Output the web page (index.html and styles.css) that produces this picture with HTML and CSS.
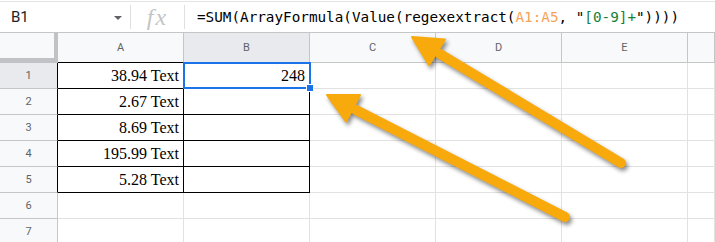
FILE: index.html
```html
<!DOCTYPE html>
<html lang="en">
<head>
    <meta charset="UTF-8">
    <title>Sheet</title>
    <link rel="stylesheet" href="styles.css">
</head>
<body>

    <div class="formula-bar">
        <div class="name-box">
            <span>B1</span>
            <span class="caret"></span>
        </div>
        <div class="divider"></div>
        <div class="fx">fx</div>
        <div class="divider"></div>
        <div class="formula">=SUM(ArrayFormula(Value(regexextract(<span class="ref">A1:A5</span>, "<span class="str">[0-9]+</span>"))))</div>
    </div>

    <div class="sheet">
        <!-- naglowki kolumn -->
        <div class="corner"></div>
        <div class="col-head boxed-top">A</div>
        <div class="col-head boxed-top sel">B</div>
        <div class="col-head">C</div>
        <div class="col-head">D</div>
        <div class="col-head">E</div>
        <div class="col-head"></div>

        <div class="row-head boxed-left sel">1</div>
        <div class="cell boxed">38.94 Text</div>
        <div class="cell boxed current">248<div class="selection"><span class="handle"></span></div></div>
        <div class="cell"></div><div class="cell"></div><div class="cell"></div><div class="cell"></div>

        <div class="row-head boxed-left">2</div>
        <div class="cell boxed">2.67 Text</div>
        <div class="cell boxed"></div>
        <div class="cell"></div><div class="cell"></div><div class="cell"></div><div class="cell"></div>

        <div class="row-head boxed-left">3</div>
        <div class="cell boxed">8.69 Text</div>
        <div class="cell boxed"></div>
        <div class="cell"></div><div class="cell"></div><div class="cell"></div><div class="cell"></div>

        <div class="row-head boxed-left">4</div>
        <div class="cell boxed">195.99 Text</div>
        <div class="cell boxed"></div>
        <div class="cell"></div><div class="cell"></div><div class="cell"></div><div class="cell"></div>

        <div class="row-head boxed-left">5</div>
        <div class="cell boxed">5.28 Text</div>
        <div class="cell boxed"></div>
        <div class="cell"></div><div class="cell"></div><div class="cell"></div><div class="cell"></div>

        <div class="row-head">6</div>
        <div class="cell"></div><div class="cell"></div><div class="cell"></div><div class="cell"></div><div class="cell"></div><div class="cell"></div>

        <div class="row-head">7</div>
        <div class="cell"></div><div class="cell"></div><div class="cell"></div><div class="cell"></div><div class="cell"></div><div class="cell"></div>
    </div>

    <!-- strzalki z adnotacja -->
    <svg class="arrows" width="715" height="242" viewBox="0 0 715 242">
        <g class="arrow">
            <line x1="621" y1="163" x2="440" y2="54" />
            <polygon points="412,37 445,39.5 429,65" />
        </g>
        <g class="arrow">
            <line x1="565" y1="217" x2="356" y2="110" />
            <polygon points="327,95 360,95 346,121.5" />
        </g>
    </svg>

</body>
</html>
```

FILE: styles.css
```css
html, body {
    margin: 0;
    height: 100%;
}

body {
    position: relative;
    width: 715px;
    height: 242px;
    overflow: hidden;
    background: #fff;
    font-family: Roboto, "Liberation Sans", sans-serif;
}

.formula-bar {
    display: flex;
    align-items: center;
    height: 30px;
    margin-top: 1px;
    border-top: 1px solid #e3e3e3;
    border-bottom: 1px solid #c4c7c5;
}

.name-box {
    width: 130px;
    box-sizing: border-box;
    padding: 0 8px 0 11px;
    display: flex;
    align-items: center;
    justify-content: space-between;
    font-size: 15px;
    color: #202124;
}

.caret {
    width: 0;
    height: 0;
    border-left: 4px solid transparent;
    border-right: 4px solid transparent;
    border-top: 4px solid #5f6368;
    margin-top: 2px;
}

.divider {
    width: 1px;
    height: 24px;
    background: #e0e0e0;
}

.fx {
    width: 53px;
    text-align: center;
    font-family: "Liberation Serif", serif;
    font-style: italic;
    font-size: 24px;
    letter-spacing: 2px;
    color: #c4c4c4;
    line-height: 30px;
}

.formula {
    padding-left: 12px;
    font-family: "DejaVu Sans Mono", monospace;
    font-size: 14.3px;
    color: #000;
    white-space: nowrap;
}

.formula .ref {
    color: #f4a35a;
}

.formula .str {
    color: #188038;
}

.sheet {
    display: grid;
    grid-template-columns: 58px repeat(5, 126px) 1fr;
    grid-template-rows: 30px repeat(7, 26px);
}

.corner {
    background: #f8f9fa;
    border-right: 4px solid #c0c2c5;
    border-bottom: 5px solid #c0c2c5;
}

.col-head {
    background: #f8f9fa;
    border-right: 1px solid #c4c7c5;
    border-bottom: 1px solid #c4c7c5;
    color: #5f6368;
    font-size: 11px;
    display: flex;
    align-items: center;
    justify-content: center;
}

.row-head {
    background: #f8f9fa;
    border-right: 1px solid #c4c7c5;
    border-bottom: 1px solid #c4c7c5;
    color: #5f6368;
    font-size: 11px;
    display: flex;
    align-items: center;
    justify-content: center;
}

.sel {
    background: #e8eaed;
}

.boxed-top {
    border-bottom-color: #000;
}

.boxed-left {
    border-right-color: #000;
}

.cell {
    border-right: 1px solid #e2e2e3;
    border-bottom: 1px solid #e2e2e3;
    font-family: "Liberation Serif", serif;
    font-size: 16px;
    color: #000;
    text-align: right;
    padding-right: 4px;
    line-height: 25px;
    white-space: nowrap;
}

.cell.boxed {
    border-right-color: #000;
    border-bottom-color: #000;
}

.current {
    position: relative;
}

.selection {
    position: absolute;
    top: -1px;
    left: -1px;
    right: -2px;
    bottom: -1px;
    border: 2px solid #1a73e8;
}

.handle {
    position: absolute;
    right: -5px;
    bottom: -5px;
    width: 6px;
    height: 6px;
    background: #1a73e8;
    border: 1px solid #fff;
}

.arrows {
    position: absolute;
    top: 0;
    left: 0;
    pointer-events: none;
}

.arrow {
    filter: drop-shadow(2px 3px 2px rgba(0, 0, 0, 0.45));
}

.arrow line {
    stroke: #f8aa0c;
    stroke-width: 10;
    stroke-linecap: round;
}

.arrow polygon {
    fill: #f8aa0c;
    stroke: #f8aa0c;
    stroke-width: 2;
    stroke-linejoin: round;
}
```
